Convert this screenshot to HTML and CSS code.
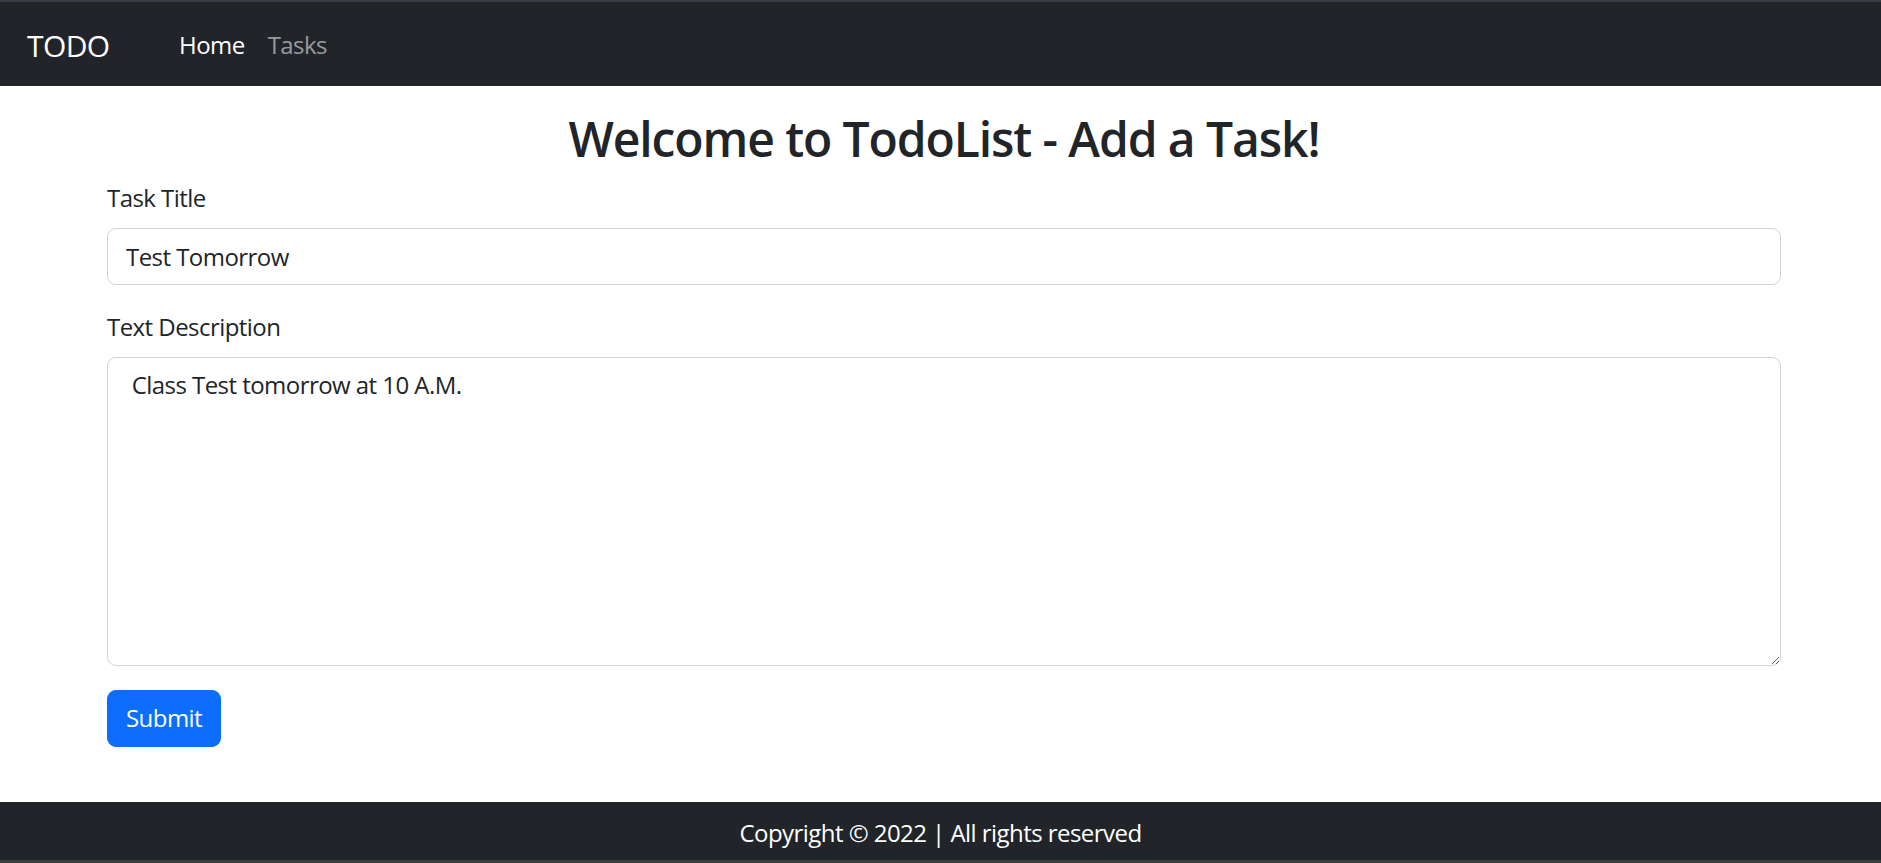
FILE: index.html
```html
<!DOCTYPE html>
<html lang="en">
<head>
<meta charset="utf-8">
<title>TodoList</title>
<link rel="stylesheet" href="styles.css">
</head>
<body>
<nav class="navbar">
  <a class="brand" href="#">TODO</a>
  <ul class="nav">
    <li><a class="nav-link active" href="#">Home</a></li>
    <li><a class="nav-link" href="#">Tasks</a></li>
  </ul>
</nav>
<main class="container">
  <h2 class="title">Welcome to TodoList - Add a Task!</h2>
  <form class="task-form">
    <div class="field">
      <label class="form-label" for="title">Task Title</label>
      <input class="form-control" id="title" type="text" value="Test Tomorrow">
    </div>
    <div class="field">
      <label class="form-label" for="desc">Text Description</label>
      <textarea class="form-control" id="desc" rows="8"> Class Test tomorrow at 10 A.M.</textarea>
    </div>
    <button class="btn-primary" type="button">Submit</button>
  </form>
</main>
<footer class="footer">
  <p class="copy">Copyright © 2022 | All rights reserved</p>
</footer>
</body>
</html>
```
FILE: styles.css
```css
* { box-sizing: border-box; }
html, body { height: 100%; }
body {
  margin: 0;
  display: flex;
  flex-direction: column;
  height: 100vh;
  font-family: "Segoe UI", "Open Sans", "Noto Sans", sans-serif;
  font-size: 24px;
  line-height: 1.5;
  letter-spacing: -0.55px;
  color: #212529;
  background: #fff;
}
.navbar {
  flex: 0 0 auto;
  height: 86px;
  border-top: 2px solid #3a3a48;
  background: #212529;
  display: flex;
  align-items: center;
  padding-left: 27px;
  padding-top: 2px;
}
.brand {
  color: #fff;
  text-decoration: none;
  font-size: 30px;
  letter-spacing: -0.6px;
  width: 152px;
}
.nav {
  list-style: none;
  margin: 0;
  padding: 0;
  display: flex;
  gap: 23px;
}
.nav-link {
  color: rgba(255,255,255,.55);
  text-decoration: none;
  font-size: 24px;
}
.nav-link.active { color: #fff; }
.container {
  flex: 1 0 auto;
  width: 1674px;
  margin-left: 107px;
  padding-top: 24px;
}
.title {
  margin: 0 0 12px;
  font-size: 48px;
  font-weight: 600;
  line-height: 1.2;
  letter-spacing: -1.1px;
  text-align: center;
}
.field { margin-bottom: 24px; }
.form-label {
  display: block;
  margin-bottom: 12px;
}
.form-control {
  display: block;
  width: 100%;
  padding: 9px 18px;
  font: inherit;
  font-size: 24px;
  line-height: 1.5;
  letter-spacing: -0.55px;
  color: #212529;
  background: #fff;
  border: 1.5px solid #ced4da;
  border-radius: 9px;
  outline: none;
}
input.form-control { height: 57px; }
textarea.form-control { height: 309px; resize: vertical; }
.btn-primary {
  display: inline-block;
  height: 57px;
  padding: 9px 18px;
  font: inherit;
  font-size: 24px;
  line-height: 1.5;
  letter-spacing: -0.55px;
  color: #fff;
  background: #0d6efd;
  border: 1.5px solid #0d6efd;
  border-radius: 9px;
}
.footer {
  flex: 0 0 auto;
  height: 61px;
  padding-top: 3px;
  background: #212529;
  border-bottom: 3px solid #3c3c3c;
  display: flex;
  align-items: center;
  justify-content: center;
}
.copy {
  margin: 0;
  color: #fff;
}
```
